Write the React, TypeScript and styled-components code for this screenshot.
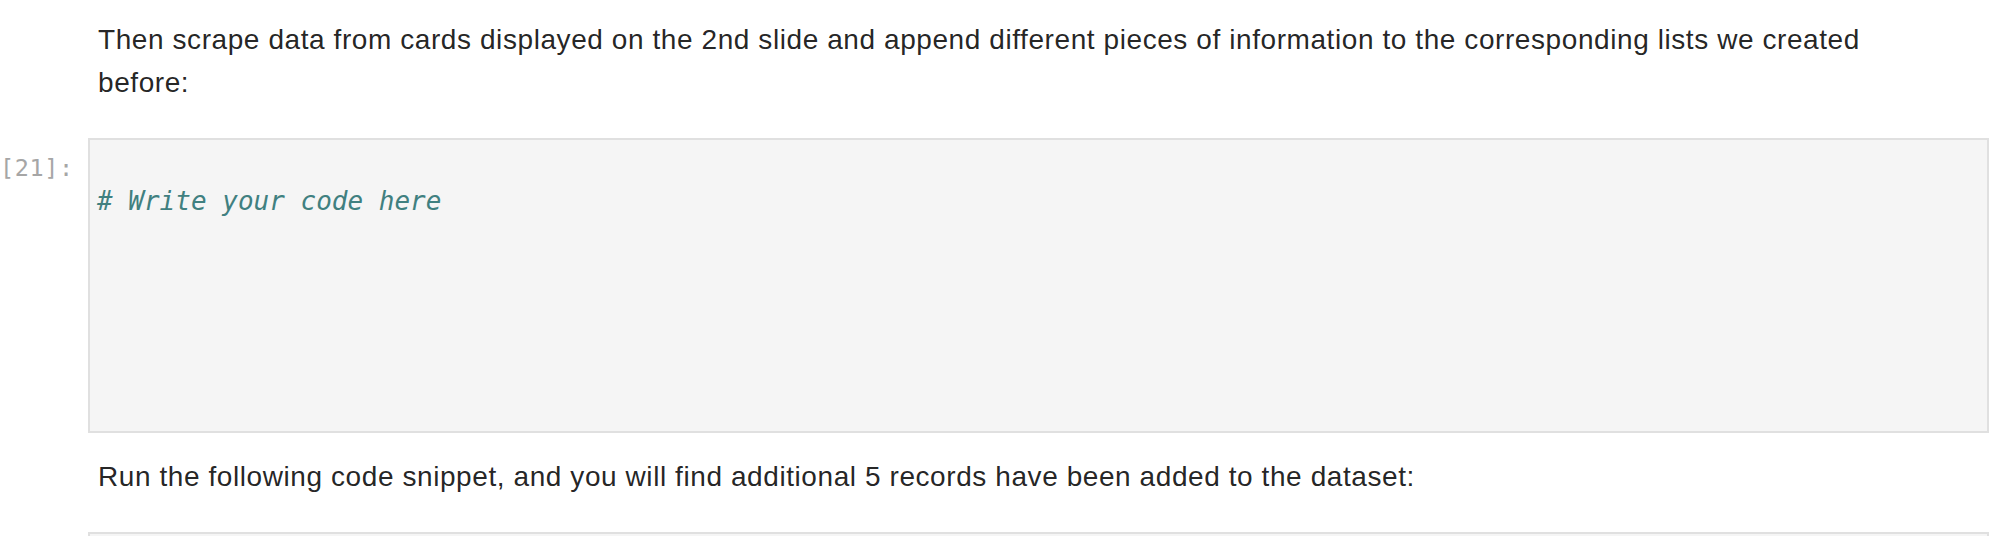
import React from "react";
import styled, { createGlobalStyle } from "styled-components";

const Global = createGlobalStyle`
  html, body { margin: 0; padding: 0; background: #ffffff; }
  body { font-family: "Liberation Sans", Arial, sans-serif; }
`;

const Notebook = styled.div`
  display: flex;
  flex-direction: column;
  width: 2014px;
  padding-top: 18px;
`;

const MarkdownCell = styled.div<{ $mb: number }>`
  padding-left: 98px;
  padding-right: 100px;
  margin-bottom: ${(p) => p.$mb}px;
  font-family: "Liberation Sans", Arial, sans-serif;
  font-size: 28px;
  line-height: 43px;
  color: rgba(0, 0, 0, 0.87);
  letter-spacing: 0.58px;
`;

const CodeRow = styled.div<{ $mb: number }>`
  display: flex;
  align-items: flex-start;
  margin-bottom: ${(p) => p.$mb}px;
`;

const Prompt = styled.div`
  width: 72px;
  flex: none;
  padding-top: 13px;
  padding-right: 16px;
  text-align: right;
  font-family: "DejaVu Sans Mono", "Liberation Mono", monospace;
  font-size: 23.5px;
  line-height: 34px;
  color: #a6a6a6;
  letter-spacing: 0.6px;
  white-space: nowrap;
`;

const Editor = styled.div`
  width: 1901px;
  box-sizing: border-box;
  border: 2px solid #e0e0e0;
  background: #f5f5f5;
  padding: 10px 8px 9px 7px;
`;

const Line = styled.div`
  font-family: "DejaVu Sans Mono", "Liberation Mono", monospace;
  font-size: 26px;
  line-height: 34px;
  height: 34px;
  white-space: pre;
`;

const Comment = styled.span`
  font-style: italic;
  color: #408080;
`;

const codeLines = ["", "# Write your code here", "", "", "", "", "", ""];

export default function App() {
  return (
    <>
      <Global />
      <Notebook>
        <MarkdownCell $mb={34}>
          Then scrape data from cards displayed on the 2nd slide and append different pieces of
          information to the corresponding lists we created before:
        </MarkdownCell>
        <CodeRow $mb={22}>
          <Prompt>[21]:</Prompt>
          <Editor>
            {codeLines.map((l, i) => (
              <Line key={i}>{l ? <Comment>{l}</Comment> : " "}</Line>
            ))}
          </Editor>
        </CodeRow>
        <MarkdownCell $mb={34}>
          Run the following code snippet, and you will find additional 5 records have been added
          to the dataset:
        </MarkdownCell>
        <CodeRow $mb={0}>
          <Prompt />
          <Editor>
            {codeLines.map((l, i) => (
              <Line key={i}> </Line>
            ))}
          </Editor>
        </CodeRow>
      </Notebook>
    </>
  );
}
